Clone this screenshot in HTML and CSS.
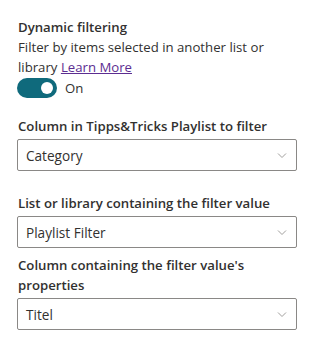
FILE: index.html
```html
<!DOCTYPE html>
<html lang="en">

<head>
    <meta charset="UTF-8">
    <meta name="viewport" content="width=device-width, initial-scale=1.0">
    <title>Dynamic filtering</title>
    <link rel="stylesheet" href="styles.css">
</head>

<body>
    <div class="pane">
        <div class="group">
            <div class="title">Dynamic filtering</div>
            <div class="desc">Filter by items selected in another list or library <a href="#" class="link">Learn More</a></div>
            <div class="toggle-row">
                <span class="toggle"><span class="thumb"></span></span>
                <span class="toggle-text">On</span>
            </div>
        </div>

        <div class="field first">
            <label class="label">Column in Tipps&amp;Tricks Playlist to filter</label>
            <div class="dropdown">
                <span>Category</span>
                <svg class="chevron" width="12" height="12" viewBox="0 0 12 12"><path d="M2 4.5 L6 8.5 L10 4.5" fill="none" stroke="#a19f9d" stroke-width="1"/></svg>
            </div>
        </div>

        <div class="field">
            <label class="label">List or library containing the filter value</label>
            <div class="dropdown">
                <span>Playlist Filter</span>
                <svg class="chevron" width="12" height="12" viewBox="0 0 12 12"><path d="M2 4.5 L6 8.5 L10 4.5" fill="none" stroke="#a19f9d" stroke-width="1"/></svg>
            </div>
        </div>

        <div class="field tight">
            <label class="label">Column containing the filter value's properties</label>
            <div class="dropdown">
                <span>Titel</span>
                <svg class="chevron" width="12" height="12" viewBox="0 0 12 12"><path d="M2 4.5 L6 8.5 L10 4.5" fill="none" stroke="#a19f9d" stroke-width="1"/></svg>
            </div>
        </div>
    </div>
</body>

</html>
```

FILE: styles.css
```css
* {
    margin: 0;
    padding: 0;
    box-sizing: border-box;
}

body {
    background: #ffffff;
    color: #323130;
    font-family: 'Open Sans', 'Noto Sans', sans-serif;
    font-size: 13.2px;
}

.pane {
    padding: 17px 16px 0 18px;
    width: 313px;
}

.title {
    font-weight: 600;
    line-height: 20px;
}

.desc {
    line-height: 20px;
}

.link {
    color: #5c2d91;
    text-decoration: underline;
}

.toggle-row {
    display: flex;
    align-items: center;
    gap: 8px;
    margin-top: 1px;
    margin-left: -1px;
}

.toggle {
    width: 40px;
    height: 20px;
    border-radius: 10px;
    background: #0f6a7c;
    display: flex;
    align-items: center;
    justify-content: flex-end;
    padding: 0 4px;
}

.thumb {
    width: 12px;
    height: 12px;
    border-radius: 50%;
    background: #ffffff;
}

.toggle-text {
    line-height: 20px;
}

.field {
    display: flex;
    flex-direction: column;
}

.field.first {
    margin-top: 13px;
}

.field + .field {
    margin-top: 17px;
}

.field.tight {
    margin-top: 2px;
}

.label {
    font-weight: 600;
    line-height: 20px;
    padding: 5px 0 3px;
}

.dropdown {
    height: 32px;
    border: 1px solid #8a8886;
    border-radius: 2px;
    display: flex;
    align-items: center;
    justify-content: space-between;
    padding: 0 8px 0 8px;
    width: 280px;
    margin-left: -1px;
    font-size: 13.6px;
}

.chevron {
    display: block;
}
```
